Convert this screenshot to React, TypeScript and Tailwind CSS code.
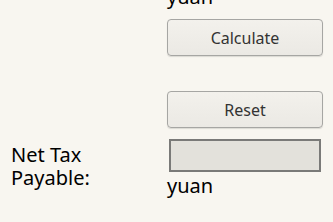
import React from "react";

export default function App() {
  const font = { fontFamily: '"Noto Sans", "Open Sans", sans-serif' };
  return (
    <div className="w-[333px] h-[222px] overflow-hidden bg-[#f8f6f0] text-black" style={font}>
      <div className="-mt-[17px] flex flex-col">
        <div className="flex">
          <div className="w-[167px]" />
          <div className="text-[20px] leading-[27px]">yuan</div>
        </div>
        <div className="flex mt-[9px]">
          <div className="w-[167px]" />
          <button className="w-[156px] h-[37px] rounded-[4px] border border-[#a6a6a3] bg-gradient-to-b from-[#f3f1ec] to-[#ebe9e4] shadow-[0_1px_1px_rgba(0,0,0,0.12)] text-[16px] text-[#333333]">
            Calculate
          </button>
        </div>
        <div className="flex mt-[35px]">
          <div className="w-[167px]" />
          <button className="w-[156px] h-[37px] rounded-[4px] border border-[#a6a6a3] bg-gradient-to-b from-[#f3f1ec] to-[#ebe9e4] shadow-[0_1px_1px_rgba(0,0,0,0.12)] text-[16px] text-[#333333]">
            Reset
          </button>
        </div>
        <div className="flex mt-[11px]">
          <div className="w-[167px] pl-[11px] pt-[4px] text-[20px] leading-[23px]">
            Net Tax
            <br />
            Payable:
          </div>
          <div className="flex flex-col">
            <div className="ml-[2px] w-[152px] h-[33px] border-2 border-[#7a7a78] bg-[#e3e1db]" />
            <div className="text-[20px] leading-[27px]">yuan</div>
          </div>
        </div>
      </div>
    </div>
  );
}
